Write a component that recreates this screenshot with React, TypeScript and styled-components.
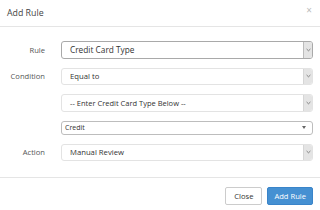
import React from "react";
import styled, { createGlobalStyle } from "styled-components";

const Global = createGlobalStyle`
  html, body { margin: 0; padding: 0; background: #fff; }
  body { font-family: "Open Sans", "Liberation Sans", sans-serif; color: #333; }
  * { box-sizing: border-box; }
`;

const Modal = styled.div`
  width: 320px;
  height: 210px;
  display: flex;
  flex-direction: column;
  background: #fff;
`;

const Header = styled.div`
  height: 27px;
  padding: 0 7px;
  display: flex;
  align-items: center;
  justify-content: space-between;
  border-bottom: 1px solid #e5e5e5;
`;

const Title = styled.div`
  font-size: 8.8px;
  color: #444;
  margin-top: -1px;
`;

const CloseX = styled.div`
  font-size: 10px;
  color: #bbb;
  line-height: 1;
  margin-top: -7px;
  margin-right: 1px;
`;

const Body = styled.div`
  padding: 14px 7px 16px 0;
  display: flex;
  flex-direction: column;
  gap: 9px;
  border-bottom: 1px solid #e5e5e5;
`;

const Row = styled.div`
  display: grid;
  grid-template-columns: 45px 1fr;
  column-gap: 16px;
  align-items: center;
`;

const Label = styled.div`
  font-size: 7.6px;
  color: #555;
  text-align: right;
`;

const Select = styled.div<{ $focus?: boolean }>`
  height: 17.5px;
  border: 1px solid ${(p) => (p.$focus ? "#a9a9a9" : "#e3e3e3")};
  border-radius: 3px;
  display: flex;
  align-items: stretch;
  background: #fff;
  overflow: hidden;
`;

const SelectText = styled.div<{ $size: number }>`
  flex: 1;
  font-size: ${(p) => p.$size}px;
  color: #333;
  padding-left: 8px;
  display: flex;
  align-items: center;
  white-space: nowrap;
`;

const ArrowBox = styled.div<{ $focus?: boolean }>`
  width: 9px;
  background: #e4e4e4;
  border-left: 1px solid ${(p) => (p.$focus ? "#bcbcbc" : "#d6d6d6")};
  display: flex;
  align-items: center;
  justify-content: center;
`;

const SmallSelect = styled.div`
  height: 14px;
  border: 1px solid #bdbdbd;
  border-radius: 3px;
  display: flex;
  align-items: center;
  justify-content: space-between;
  padding: 0 6px 0 3px;
  font-size: 7px;
  color: #333;
`;

const Footer = styled.div`
  flex: 1;
  display: flex;
  justify-content: flex-end;
  align-items: flex-start;
  gap: 5px;
  padding: 9px 7px 0 0;
`;

const Button = styled.div<{ $primary?: boolean }>`
  height: 18px;
  padding: 0 ${(p) => (p.$primary ? "6px" : "8px")};
  border-radius: 2px;
  font-size: 7.6px;
  display: flex;
  align-items: center;
  border: 1px solid ${(p) => (p.$primary ? "#3a84c9" : "#cccccc")};
  background: ${(p) => (p.$primary ? "#4590d2" : "#fff")};
  color: ${(p) => (p.$primary ? "#fff" : "#333")};
`;

const Chevron = () => (
  <svg width="5" height="4" viewBox="0 0 5 4">
    <path d="M0.6 1 L2.5 2.8 L4.4 1" fill="none" stroke="#777" strokeWidth="0.9" />
  </svg>
);

const Tri = () => (
  <svg width="4" height="3" viewBox="0 0 4 3">
    <path d="M0 0 L4 0 L2 3 Z" fill="#666" />
  </svg>
);

const Sel = ({ text, focus, size = 7.7 }: { text: string; focus?: boolean; size?: number }) => (
  <Select $focus={focus}>
    <SelectText $size={size}>{text}</SelectText>
    <ArrowBox $focus={focus}>
      <Chevron />
    </ArrowBox>
  </Select>
);

export default function App() {
  return (
    <Modal>
      <Global />
      <Header>
        <Title>Add Rule</Title>
        <CloseX>×</CloseX>
      </Header>
      <Body>
        <Row>
          <Label>Rule</Label>
          <Sel text="Credit Card Type" focus size={8.3} />
        </Row>
        <Row>
          <Label>Condition</Label>
          <Sel text="Equal to" />
        </Row>
        <Row>
          <Label />
          <Sel text="-- Enter Credit Card Type Below --" size={7.5} />
        </Row>
        <Row>
          <Label />
          <SmallSelect>
            <span>Credit</span>
            <Tri />
          </SmallSelect>
        </Row>
        <Row>
          <Label>Action</Label>
          <Sel text="Manual Review" />
        </Row>
      </Body>
      <Footer>
        <Button>Close</Button>
        <Button $primary>Add Rule</Button>
      </Footer>
    </Modal>
  );
}
